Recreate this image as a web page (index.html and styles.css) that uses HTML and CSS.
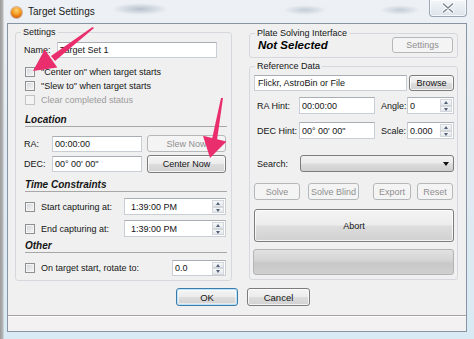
FILE: index.html
```html
<!DOCTYPE html>
<html lang="en">

<head>
    <meta charset="UTF-8">
    <title>Target Settings</title>
    <link rel="stylesheet" href="styles.css">
</head>

<body>
    <div class="window">
        <div class="titlebar">
            <span class="app_icon"></span>
            <span class="title">Target Settings</span>
            <div class="close">
                <svg width="12" height="10" viewBox="0 0 12 10">
                    <path d="M1.5 1 L10.5 9 M10.5 1 L1.5 9" stroke="#fff" stroke-width="3.4" stroke-linecap="round" />
                    <path d="M1.5 1 L10.5 9 M10.5 1 L1.5 9" stroke="#7d8794" stroke-width="1.6" stroke-linecap="round" />
                </svg>
            </div>
        </div>
        <div class="client">
            <div class="main">
                <fieldset class="group settings">
                    <legend>Settings</legend>
                    <div class="row name_row">
                        <span class="lbl name_lbl">Name:</span>
                        <div class="textbox name_box">Target Set 1</div>
                    </div>
                    <div class="check_row first"><span class="cb"></span>"Center on" when target starts</div>
                    <div class="check_row"><span class="cb"></span>"Slew to" when target starts</div>
                    <div class="check_row disabled"><span class="cb"></span>Clear completed status</div>

                    <div class="head loc_head">Location</div>
                    <div class="row ra_row">
                        <span class="lbl coord_lbl">RA:</span>
                        <div class="textbox coord_box">00:00:00</div>
                        <div class="btn off coord_btn">Slew Now</div>
                    </div>
                    <div class="row dec_row">
                        <span class="lbl coord_lbl">DEC:</span>
                        <div class="textbox coord_box">00° 00' 00"</div>
                        <div class="btn coord_btn tall">Center Now</div>
                    </div>

                    <div class="head time_head">Time Constraints</div>
                    <div class="row time_row start_row">
                        <span class="cb"></span><span class="time_lbl">Start capturing at:</span>
                        <div class="numeric time_box"><span>1:39:00 PM</span><span class="spin"><i class="up"></i><i class="down"></i></span></div>
                    </div>
                    <div class="row time_row end_row">
                        <span class="cb"></span><span class="time_lbl">End capturing at:</span>
                        <div class="numeric time_box"><span>1:39:00 PM</span><span class="spin"><i class="up"></i><i class="down"></i></span></div>
                    </div>

                    <div class="head other_head">Other</div>
                    <div class="row rotate_row">
                        <span class="cb"></span><span class="rotate_lbl">On target start, rotate to:</span>
                        <div class="numeric rotate_box"><span>0.0</span><span class="spin"><i class="up"></i><i class="down"></i></span></div>
                    </div>
                </fieldset>

                <div class="right">
                    <fieldset class="group plate">
                        <legend>Plate Solving Interface</legend>
                        <div class="row plate_row">
                            <span class="not_sel">Not Selected</span>
                            <div class="btn off plate_btn">Settings</div>
                        </div>
                    </fieldset>
                    <fieldset class="group ref">
                        <legend>Reference Data</legend>
                        <div class="row src_row">
                            <div class="textbox src_box">Flickr, AstroBin or File</div>
                            <div class="btn browse_btn">Browse</div>
                        </div>
                        <div class="row hint_row ra_hint">
                            <span class="lbl hint_lbl">RA Hint:</span>
                            <div class="textbox hint_box">00:00:00</div>
                            <span class="lbl small_lbl">Angle:</span>
                            <div class="numeric hint_num"><span>0</span><span class="spin"><i class="up"></i><i class="down"></i></span></div>
                        </div>
                        <div class="row hint_row dec_hint">
                            <span class="lbl hint_lbl">DEC Hint:</span>
                            <div class="textbox hint_box">00° 00' 00"</div>
                            <span class="lbl small_lbl">Scale:</span>
                            <div class="numeric hint_num"><span>0.000</span><span class="spin"><i class="up"></i><i class="down"></i></span></div>
                        </div>
                        <div class="row search_row">
                            <span class="lbl search_lbl">Search:</span>
                            <div class="combo"><i class="drop"></i></div>
                        </div>
                        <div class="row solve_row">
                            <div class="btn off solve">Solve</div>
                            <div class="btn off blind">Solve Blind</div>
                            <div class="btn off export">Export</div>
                            <div class="btn off reset">Reset</div>
                        </div>
                        <div class="btn abort">Abort</div>
                        <div class="progress"></div>
                    </fieldset>
                </div>
            </div>

            <div class="actions">
                <div class="btn ok">OK</div>
                <div class="btn cancel">Cancel</div>
            </div>
            <div class="status"></div>
        </div>

        <!-- pink call-out arrows drawn over the dialog -->
        <svg class="arrows" width="474" height="339" viewBox="0 0 474 339">
            <polygon points="94,28 92.5,27 51,56 55,61" fill="#ea2d6c" />
            <polygon points="33,71 44.7,49.4 57.3,67.4" fill="#ea2d6c" />
            <polygon points="223,98 221,98 212,139 217,140" fill="#ea2d6c" />
            <polygon points="210,158 203,135.8 226.4,141.4" fill="#ea2d6c" />
        </svg>
    </div>
</body>

</html>
```

FILE: styles.css
```css
* {
    box-sizing: border-box;
}

html,
body {
    margin: 0;
}

body {
    width: 474px;
    height: 339px;
    overflow: hidden;
    font-family: "Liberation Sans", Arial, sans-serif;
    font-size: 9px;
    color: #151515;
}

.window {
    position: relative;
    display: flex;
    flex-direction: column;
    width: 474px;
    height: 339px;
    padding: 0 7px 7px 7px;
    background:
        radial-gradient(ellipse 28px 6px at 140px 9px, rgba(120, 135, 155, .45), transparent),
        radial-gradient(ellipse 22px 5px at 305px 10px, rgba(120, 135, 155, .35), transparent),
        radial-gradient(ellipse 20px 5px at 400px 10px, rgba(120, 135, 155, .35), transparent),
        linear-gradient(to right, #9a9a9a 0, #b8b8b8 3px, transparent 4px),
        linear-gradient(#edf1f5, #e2eaf1 40%, #d9eaf4);
}

/* title bar */
.titlebar {
    display: flex;
    align-items: center;
    height: 23px;
    padding-left: 4px;
}

.app_icon {
    width: 11px;
    height: 11px;
    margin-top: 1px;
    border-radius: 50%;
    background: radial-gradient(circle at 50% 30%, #ffd27a, #f39a1d 45%, #c2410c);
    box-shadow: 0 0 0 1px rgba(160, 60, 10, .35);
}

.title {
    margin-left: 6px;
    font-size: 10px;
    color: #1b1b1b;
}

.close {
    display: flex;
    justify-content: center;
    align-items: center;
    width: 38px;
    height: 17px;
    margin: -6px 0 0 auto;
    border: 1px solid #9aa6b3;
    border-top: 0;
    border-radius: 0 0 4px 4px;
    background: linear-gradient(#f3f6f9, #dbe3ea);
    box-shadow: inset 0 0 0 1px rgba(255, 255, 255, .7);
}

/* client area */
.client {
    flex: 1;
    display: flex;
    flex-direction: column;
    border: 1px solid #8794a3;
    background-color: #f0f0f0;
}

.main {
    display: flex;
    align-items: flex-start;
    padding-left: 7px;
}

.group {
    margin: 0;
    border: 1px solid #d5d9dd;
    border-radius: 3px;
    min-width: 0;
}

.group legend {
    padding: 0 2px;
    margin-left: -3px;
    line-height: 12px;
}

.settings {
    width: 217px;
    margin-top: 2px;
    padding: 0 5px 4px 8px;
}

.row {
    display: flex;
    align-items: center;
}

.lbl {
    flex: none;
}

.textbox,
.numeric {
    position: relative;
    display: flex;
    align-items: center;
    height: 16px;
    padding-left: 2px;
    border: 1px solid #c9ced6;
    border-top-color: #a9adb4;
    background-color: #fff;
    white-space: nowrap;
    overflow: hidden;
}

.name_row {
    height: 16px;
    margin-top: 4px;
}

.name_lbl {
    width: 33px;
}

.name_box {
    width: 160px;
}

.check_row {
    display: flex;
    align-items: center;
    height: 14px;
}

.check_row.first {
    margin-top: 7px;
}

.cb {
    flex: none;
    width: 10px;
    height: 10px;
    margin: 0 6px 0 1px;
    border: 1px solid #8f9092;
    background: linear-gradient(135deg, #d2d5da, #f7f7f7);
    box-shadow: inset 0 0 0 1px #f4f4f4;
}

.check_row.disabled {
    color: #9b9b9b;
}

.check_row.disabled .cb {
    border-color: #c3c3c3;
    background: #f4f4f4;
}

.head {
    height: 13px;
    margin: 0 -1px 0 1px;
    line-height: 12px;
    font-size: 10px;
    font-weight: bold;
    font-style: italic;
    border-bottom: 1px solid #a7a7a7;
}

.loc_head {
    margin-top: 7px;
}

.ra_row {
    height: 17px;
    margin-top: 8px;
}

.dec_row {
    height: 18px;
    margin-top: 3px;
}

.coord_lbl {
    width: 28px;
}

.coord_box {
    width: 90px;
}

.coord_btn {
    width: 79px;
    height: 17px;
    margin-left: 5px;
}

.coord_btn.tall {
    height: 18px;
}

.time_head {
    margin-top: 6px;
}

.time_row {
    height: 17px;
}

.start_row {
    margin-top: 6px;
}

.end_row {
    margin-top: 5px;
}

.time_lbl {
    width: 83px;
}

.time_box {
    width: 102px;
    height: 17px;
    padding-left: 6px;
}

.other_head {
    margin-top: 3px;
}

.rotate_row {
    height: 16px;
    margin-top: 7px;
}

.rotate_lbl {
    width: 131px;
}

.rotate_box {
    width: 54px;
}

/* up/down spinner */
.spin {
    display: flex;
    flex-direction: column;
    margin-left: auto;
    margin-right: 1px;
    width: 12px;
    height: 13px;
}

.spin i {
    position: relative;
    flex: 1;
    border: 1px solid #d3d7dc;
    background: linear-gradient(#f6f7f8, #e4e7eb);
}

.spin i::after {
    content: "";
    position: absolute;
    left: 3px;
    top: 1px;
    border-left: 2px solid transparent;
    border-right: 2px solid transparent;
}

.spin .up::after {
    border-bottom: 3px solid #53627a;
}

.spin .down::after {
    top: 1px;
    border-top: 3px solid #53627a;
}

/* buttons */
.btn {
    display: flex;
    justify-content: center;
    align-items: center;
    flex: none;
    border: 1px solid #7c7c7c;
    border-radius: 3px;
    background: linear-gradient(#f4f4f4 0, #ececec 48%, #dddddd 52%, #d1d1d1 100%);
    box-shadow: inset 0 0 0 1px rgba(255, 255, 255, .75);
    white-space: nowrap;
}

.btn.off {
    border-color: #b5b8bb;
    background: #f4f4f4;
    box-shadow: none;
    color: #8f8f8f;
}

/* right column */
.right {
    display: flex;
    flex-direction: column;
    width: 209px;
    margin-left: 17px;
}

.plate {
    margin-top: 3px;
    padding: 0 4px 4px 8px;
}

.plate_row {
    height: 16px;
    margin-top: -2px;
}

.not_sel {
    font-size: 11.5px;
    font-weight: bold;
    font-style: italic;
    color: #000;
}

.plate_btn {
    width: 61px;
    height: 16px;
    margin-left: auto;
}

.ref {
    margin-top: 2px;
    padding: 0 3px 4px 4px;
}

.ref legend {
    margin-left: 1px;
}

.src_row {
    height: 16px;
    margin-top: 3px;
}

.src_box {
    width: 153px;
    padding-left: 3px;
}

.browse_btn {
    width: 45px;
    height: 16px;
    margin-left: 2px;
}

.hint_row {
    height: 17px;
}

.ra_hint {
    margin-top: 6px;
}

.dec_hint {
    margin-top: 8px;
}

.hint_lbl {
    width: 42px;
    margin-left: 3px;
}

.hint_box {
    width: 76px;
    height: 17px;
}

.small_lbl {
    width: 26px;
    margin-left: 6px;
}

.hint_num {
    width: 47px;
    height: 17px;
}

.search_row {
    height: 17px;
    margin-top: 16px;
}

.search_lbl {
    width: 43px;
    margin-left: 3px;
}

.combo {
    position: relative;
    width: 154px;
    height: 17px;
    border: 1px solid #7c7c7c;
    border-radius: 3px;
    background: linear-gradient(#f2f2f2 0, #ebebeb 48%, #dddddd 52%, #cfcfcf 100%);
}

.combo .drop {
    position: absolute;
    right: 4px;
    top: 6px;
    border-left: 3px solid transparent;
    border-right: 3px solid transparent;
    border-top: 4px solid #111;
}

.solve_row {
    height: 17px;
    margin-top: 11px;
}

.solve_row .btn {
    height: 17px;
}

.solve {
    width: 46px;
}

.blind {
    width: 51px;
    margin-left: 8px;
}

.export {
    width: 38px;
    margin-left: 14px;
}

.reset {
    width: 36px;
    margin-left: 6px;
}

.abort {
    width: 200px;
    height: 33px;
    margin-top: 9px;
}

.progress {
    width: 201px;
    height: 26px;
    margin: 7px 0 0 -1px;
    border: 1px solid #b4b4b4;
    border-radius: 3px;
    background: linear-gradient(#e2e2e2, #d3d3d3 45%, #c8c8c8 55%, #d0d0d0);
}

/* dialog buttons */
.actions {
    display: flex;
    margin: 7px 0 0 168px;
}

.actions .btn {
    height: 18px;
    font-size: 9.5px;
}

.ok {
    width: 62px;
    border-color: #3d7bad;
    box-shadow: inset 0 0 0 1px #b9e3f8, inset 0 0 0 2px rgba(255, 255, 255, .5);
}

.cancel {
    width: 63px;
    margin-left: 9px;
}

.status {
    flex: 1;
    margin-top: 9px;
    border-top: 1px solid #a3a3a3;
    box-shadow: inset 0 1px 0 #fff;
    background-color: #f3f1f1;
}

.arrows {
    position: absolute;
    left: 0;
    top: 0;
    pointer-events: none;
}
```
